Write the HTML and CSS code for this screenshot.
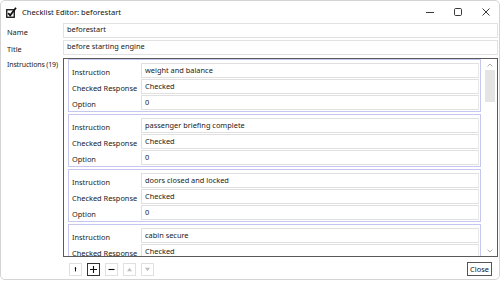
FILE: index.html
```html
<!DOCTYPE html>
<html>
<head>
<meta charset="utf-8">
<link rel="stylesheet" href="styles.css">
</head>
<body>
<div class="window">
  <div class="titlebar">
    <svg class="appicon" width="11" height="11" viewBox="0 0 11 11">
      <rect x="0.75" y="2.75" width="7.5" height="7.5" fill="none" stroke="#111" stroke-width="1.3"/>
      <path d="M2.2 6.2 L4.2 8.4 L10 0.8" fill="none" stroke="#111" stroke-width="1.8"/>
    </svg>
    <span class="title">Checklist Editor: beforestart</span>
    <div class="controls">
      <svg width="10" height="10" viewBox="0 0 10 10"><path d="M1 5.5 H9" stroke="#222" stroke-width="0.9"/></svg>
      <svg width="10" height="10" viewBox="0 0 10 10"><rect x="1.5" y="1.5" width="7" height="7" rx="1.2" fill="none" stroke="#222" stroke-width="0.9"/></svg>
      <svg width="10" height="10" viewBox="0 0 10 10"><path d="M1.5 1.5 L8.5 8.5 M8.5 1.5 L1.5 8.5" stroke="#222" stroke-width="0.9"/></svg>
    </div>
  </div>
  <div class="form">
    <div class="label">Name</div>
    <div class="field">beforestart</div>
    <div class="label">Title</div>
    <div class="field">before starting engine</div>
    <div class="label list-label">Instructions (19)</div>
    <div class="listbox">
      <div class="cards">
        <div class="card">
          <div class="row"><span class="rlabel">Instruction</span><span class="rfield">weight and balance</span></div>
          <div class="row"><span class="rlabel">Checked Response</span><span class="rfield">Checked</span></div>
          <div class="row"><span class="rlabel">Option</span><span class="rfield">0</span></div>
        </div>
        <div class="card">
          <div class="row"><span class="rlabel">Instruction</span><span class="rfield">passenger briefing complete</span></div>
          <div class="row"><span class="rlabel">Checked Response</span><span class="rfield">Checked</span></div>
          <div class="row"><span class="rlabel">Option</span><span class="rfield">0</span></div>
        </div>
        <div class="card">
          <div class="row"><span class="rlabel">Instruction</span><span class="rfield">doors closed and locked</span></div>
          <div class="row"><span class="rlabel">Checked Response</span><span class="rfield">Checked</span></div>
          <div class="row"><span class="rlabel">Option</span><span class="rfield">0</span></div>
        </div>
        <div class="card">
          <div class="row"><span class="rlabel">Instruction</span><span class="rfield">cabin secure</span></div>
          <div class="row"><span class="rlabel">Checked Response</span><span class="rfield">Checked</span></div>
          <div class="row"><span class="rlabel">Option</span><span class="rfield">0</span></div>
        </div>
      </div>
      <div class="scrollbar">
        <svg class="arrow" width="8" height="6" viewBox="0 0 8 6"><path d="M1.5 4.5 L4 2 L6.5 4.5" fill="none" stroke="#999" stroke-width="0.8"/></svg>
        <div class="thumb"></div>
        <div class="track"></div>
        <svg class="arrow" width="8" height="6" viewBox="0 0 8 6"><path d="M1.5 1.5 L4 4 L6.5 1.5" fill="none" stroke="#999" stroke-width="0.8"/></svg>
      </div>
    </div>
  </div>
  <div class="footer">
    <div class="tools">
      <div class="btn"><svg width="11" height="11" viewBox="0 0 11 11"><path d="M5.5 3.4 V7.4" stroke="#111" stroke-width="1"/><path d="M4.5 4.5 L5.5 3.1 L6.5 4.5 Z" fill="#111"/></svg></div>
      <div class="btn focus"><svg width="11" height="11" viewBox="0 0 11 11"><path d="M5.5 2 V9 M2 5.5 H9" stroke="#111" stroke-width="1.1"/></svg></div>
      <div class="btn"><svg width="11" height="11" viewBox="0 0 11 11"><path d="M2.5 5.5 H8.5" stroke="#111" stroke-width="1.1"/></svg></div>
      <div class="btn"><svg width="11" height="11" viewBox="0 0 11 11"><path d="M3 7.2 L5.5 3.8 L8 7.2 Z" fill="#bdbdbd"/></svg></div>
      <div class="btn"><svg width="11" height="11" viewBox="0 0 11 11"><path d="M3 3.8 L5.5 7.2 L8 3.8 Z" fill="#bdbdbd"/></svg></div>
    </div>
    <div class="close">Close</div>
  </div>
</div>
</body>
</html>
```
FILE: styles.css
```css
* { box-sizing: border-box; }
html, body { margin: 0; padding: 0; }
body {
  width: 500px;
  height: 281px;
  background: #fff;
  font-family: "Noto Sans", "Open Sans", sans-serif;
  font-size: 7.4px;
  color: #222;
  overflow: hidden;
}
.window {
  width: 500px;
  height: 280px;
  border: 1px solid #d4d4d4;
  border-radius: 5px;
  background: #fff;
  display: flex;
  flex-direction: column;
}
.titlebar {
  height: 21px;
  display: flex;
  align-items: center;
  padding-left: 5px;
  flex: none;
}
.appicon { margin-right: 5px; margin-top: 1px; }
.title { font-size: 7.6px; color: #111; }
.controls {
  margin-left: auto;
  display: flex;
  gap: 18px;
  padding-right: 8px;
}
.form {
  display: grid;
  grid-template-columns: 56px 1fr;
  row-gap: 2px;
  padding-right: 1px;
  padding-left: 6px;
  margin-top: 1px;
}
.label {
  display: flex;
  align-items: center;
  padding-top: 2px;
  color: #222;
  white-space: nowrap;
}
.field {
  height: 15px;
  border: 1px solid #e2e2e2;
  padding: 0 3px;
  display: flex;
  align-items: center;
  line-height: 1;
  padding-bottom: 1px;
}
.list-label {
  align-items: flex-start;
  padding-top: 3px;
  font-size: 7px;
  letter-spacing: -0.15px;
}
.listbox {
  height: 199px;
  border: 1px solid #5a5a5a;
  display: flex;
  margin-top: 1px;
  overflow: hidden;
}
.cards {
  flex: 1;
  padding: 0 2px 0 4px;
  display: flex;
  flex-direction: column;
  gap: 2px;
}
.card {
  flex: none;
  height: 53px;
  border: 1px solid #c6c6ef;
  padding: 3px 1px 1px 3px;
  display: flex;
  flex-direction: column;
  gap: 1px;
}
.row {
  display: flex;
  height: 15px;
  align-items: stretch;
}
.rlabel {
  width: 69px;
  flex: none;
  display: flex;
  align-items: center;
  padding-top: 3px;
  color: #222;
  white-space: nowrap;
}
.rfield {
  flex: 1;
  border: 1px solid #e0e0e0;
  border-right-color: #e8e8e8;
  padding: 0 3px;
  display: flex;
  align-items: center;
  padding-bottom: 2px;
}
.scrollbar {
  width: 14px;
  flex: none;
  display: flex;
  flex-direction: column;
  align-items: center;
  padding: 3px 0 2px;
}
.arrow { flex: none; }
.thumb {
  width: 10px;
  height: 32px;
  margin-top: 2px;
  background: #e4e4e4;
  flex: none;
}
.track { flex: 1; }
.footer {
  display: flex;
  align-items: center;
  padding: 5px 7px 0 68px;
}
.tools { display: flex; gap: 5px; }
.btn {
  width: 13px;
  height: 13px;
  border: 1px solid #e0e0e0;
  display: flex;
  align-items: center;
  justify-content: center;
}
.btn.focus { border-color: #333; }
.close {
  margin-left: auto;
  width: 25px;
  height: 14px;
  border: 1px solid #555;
  display: flex;
  align-items: center;
  justify-content: center;
  font-size: 7.4px;
  color: #111;
}
```
